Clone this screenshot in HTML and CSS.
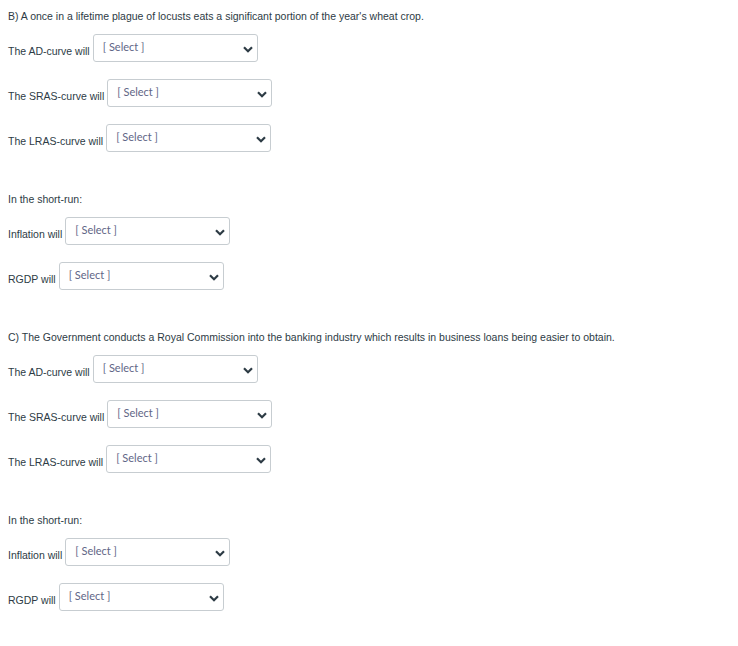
FILE: index.html
```html
<!DOCTYPE html>
<html lang="en">
<head>
<meta charset="utf-8">
<title>Quiz</title>
<link rel="stylesheet" href="styles.css">
</head>
<body>
<div class="page">
  <section class="part">
    <p class="line">B) A once in a lifetime plague of locusts eats a significant portion of the year's wheat crop.</p>
    <div class="rows">
      <div class="row"><span class="label">The AD-curve will</span><div class="select"><span class="val">[ Select ]</span><svg class="chev" width="10" height="7" viewBox="0 0 10 7"><path d="M1 1.2 L5 5.2 L9 1.2" fill="none" stroke="currentColor" stroke-width="2.2"/></svg></div></div>
      <div class="row"><span class="label">The SRAS-curve will</span><div class="select"><span class="val">[ Select ]</span><svg class="chev" width="10" height="7" viewBox="0 0 10 7"><path d="M1 1.2 L5 5.2 L9 1.2" fill="none" stroke="currentColor" stroke-width="2.2"/></svg></div></div>
      <div class="row"><span class="label">The LRAS-curve will</span><div class="select"><span class="val">[ Select ]</span><svg class="chev" width="10" height="7" viewBox="0 0 10 7"><path d="M1 1.2 L5 5.2 L9 1.2" fill="none" stroke="currentColor" stroke-width="2.2"/></svg></div></div>
    </div>
    <p class="line short">In the short-run:</p>
    <div class="rows">
      <div class="row"><span class="label">Inflation will</span><div class="select"><span class="val">[ Select ]</span><svg class="chev" width="10" height="7" viewBox="0 0 10 7"><path d="M1 1.2 L5 5.2 L9 1.2" fill="none" stroke="currentColor" stroke-width="2.2"/></svg></div></div>
      <div class="row"><span class="label">RGDP will</span><div class="select"><span class="val">[ Select ]</span><svg class="chev" width="10" height="7" viewBox="0 0 10 7"><path d="M1 1.2 L5 5.2 L9 1.2" fill="none" stroke="currentColor" stroke-width="2.2"/></svg></div></div>
    </div>
  </section>
  <section class="part">
    <p class="line">C) The Government conducts a Royal Commission into the banking industry which results in business loans being easier to obtain.</p>
    <div class="rows">
      <div class="row"><span class="label">The AD-curve will</span><div class="select"><span class="val">[ Select ]</span><svg class="chev" width="10" height="7" viewBox="0 0 10 7"><path d="M1 1.2 L5 5.2 L9 1.2" fill="none" stroke="currentColor" stroke-width="2.2"/></svg></div></div>
      <div class="row"><span class="label">The SRAS-curve will</span><div class="select"><span class="val">[ Select ]</span><svg class="chev" width="10" height="7" viewBox="0 0 10 7"><path d="M1 1.2 L5 5.2 L9 1.2" fill="none" stroke="currentColor" stroke-width="2.2"/></svg></div></div>
      <div class="row"><span class="label">The LRAS-curve will</span><div class="select"><span class="val">[ Select ]</span><svg class="chev" width="10" height="7" viewBox="0 0 10 7"><path d="M1 1.2 L5 5.2 L9 1.2" fill="none" stroke="currentColor" stroke-width="2.2"/></svg></div></div>
    </div>
    <p class="line short">In the short-run:</p>
    <div class="rows">
      <div class="row"><span class="label">Inflation will</span><div class="select"><span class="val">[ Select ]</span><svg class="chev" width="10" height="7" viewBox="0 0 10 7"><path d="M1 1.2 L5 5.2 L9 1.2" fill="none" stroke="currentColor" stroke-width="2.2"/></svg></div></div>
      <div class="row"><span class="label">RGDP will</span><div class="select"><span class="val">[ Select ]</span><svg class="chev" width="10" height="7" viewBox="0 0 10 7"><path d="M1 1.2 L5 5.2 L9 1.2" fill="none" stroke="currentColor" stroke-width="2.2"/></svg></div></div>
    </div>
  </section>
</div>
</body>
</html>
```
FILE: styles.css
```css
html, body {
  margin: 0;
  padding: 0;
  background: #ffffff;
}
body {
  font-family: "Liberation Sans", Arial, sans-serif;
  font-size: 10.5px;
  color: #2d3b45;
}
.page {
  padding: 9px 0 0 8px;
}
.part {
  margin-bottom: 40px;
}
.line {
  margin: 0;
  line-height: 15px;
  white-space: nowrap;
}
.line.short {
  margin-top: 40px;
}
.rows {
  margin-top: 10px;
  display: flex;
  flex-direction: column;
  gap: 17px;
}
.row {
  display: flex;
  align-items: flex-end;
  gap: 3px;
}
.label {
  line-height: 15px;
  margin-bottom: 3px;
  white-space: nowrap;
}
.select {
  box-sizing: border-box;
  width: 165px;
  height: 28px;
  border: 1px solid #c7cdd1;
  border-radius: 3px;
  background: #fff;
  display: flex;
  justify-content: space-between;
  align-items: flex-start;
  padding: 5px 4px 0 9px;
}
.val {
  font-family: Lato, "Open Sans", sans-serif;
  font-size: 11px;
  line-height: 13px;
  color: #5f6686;
}
.chev {
  align-self: center;
  margin-top: -3px;
  color: #2d3b45;
}
```
